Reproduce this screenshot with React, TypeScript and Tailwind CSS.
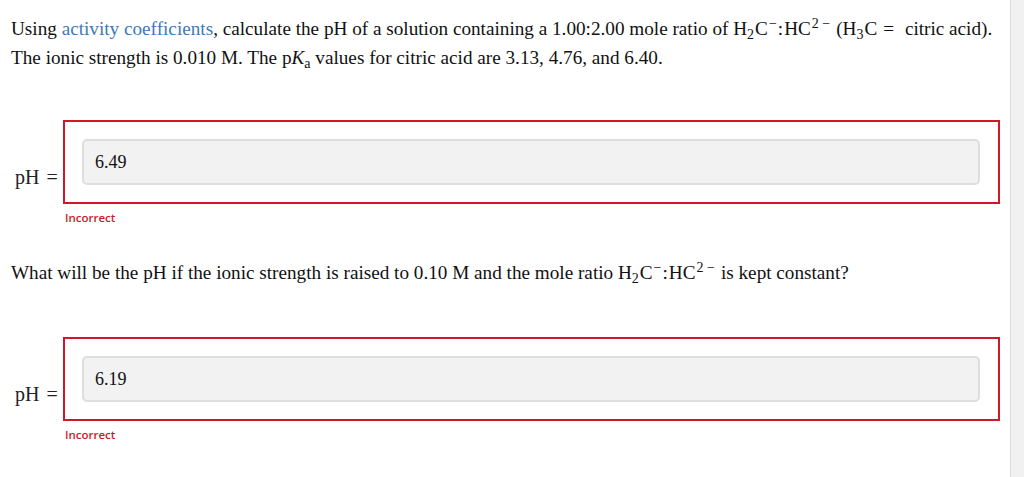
import React from "react";

const serif = { fontFamily: '"Liberation Serif", "Times New Roman", serif' };

function Answer({ value }: { value: string }) {
  return (
    <div className="flex items-start">
      <div className="w-[52px] pl-[4px] pt-[45px] text-[20px] leading-[24px] text-[#222] whitespace-nowrap">
        pH<span className="ml-[7px]">=</span>
      </div>
      <div className="flex flex-col">
        <div className="w-[937px] h-[84px] border-2 border-[#d0182b] pl-[17px] pr-[18px] pt-[17px]">
          <div className="h-[46px] rounded-[5px] border-2 border-[#dedede] bg-[#f2f2f2] pl-[11px] pt-[10px] text-[18px] leading-[22px] text-[#111]">
            {value}
          </div>
        </div>
        <div
          className="ml-[2px] mt-[6px] text-[11.5px] font-semibold leading-[16px] text-[#d0182b]"
          style={{ fontFamily: '"Open Sans", "Noto Sans", sans-serif' }}
        >
          Incorrect
        </div>
      </div>
    </div>
  );
}

function Ion() {
  return (
    <>
      H<sub className="text-[14px] relative top-[4px] mr-[1px]">2</sub>C
      <sup className="text-[14px] ml-[1px]">−</sup>
      <span className="mx-[1px]">:</span>HC
      <sup className="text-[14px] ml-[1px]">2&nbsp;−</sup>
    </>
  );
}

export default function App() {
  return (
    <div className="flex h-[477px] w-[1024px] bg-white overflow-hidden" style={serif}>
      <div className="flex-1 pl-[11px] pt-[14px]">
        <p className="text-[19.2px] leading-[29px] text-[#111] whitespace-nowrap">
          Using <span className="text-[#3a7ab8]">activity coefficients</span>, calculate the pH of a solution containing a 1.00:2.00 mole ratio of <Ion />
          <span className="ml-[6px]">(H</span>
          <sub className="text-[14px] relative top-[4px] mr-[1px]">3</sub>C<span className="mx-[6px]">=</span>&nbsp;citric acid).
          <br />
          The ionic strength is 0.010 M. The p<i>K</i>
          <sub className="text-[14px]">a</sub> values for citric acid are 3.13, 4.76, and 6.40.
        </p>
        <div className="mt-[48px]">
          <Answer value="6.49" />
        </div>
        <p className="mt-[32px] text-[19.2px] leading-[29px] text-[#111] whitespace-nowrap">
          What will be the pH if the ionic strength is raised to 0.10 M and the mole ratio <Ion />
          <span className="ml-[6px]">is kept constant?</span>
        </p>
        <div className="mt-[50px]">
          <Answer value="6.19" />
        </div>
      </div>
      <div className="w-[14px] border-l border-[#dcdcdc] bg-[#f1f1f1]" />
    </div>
  );
}
